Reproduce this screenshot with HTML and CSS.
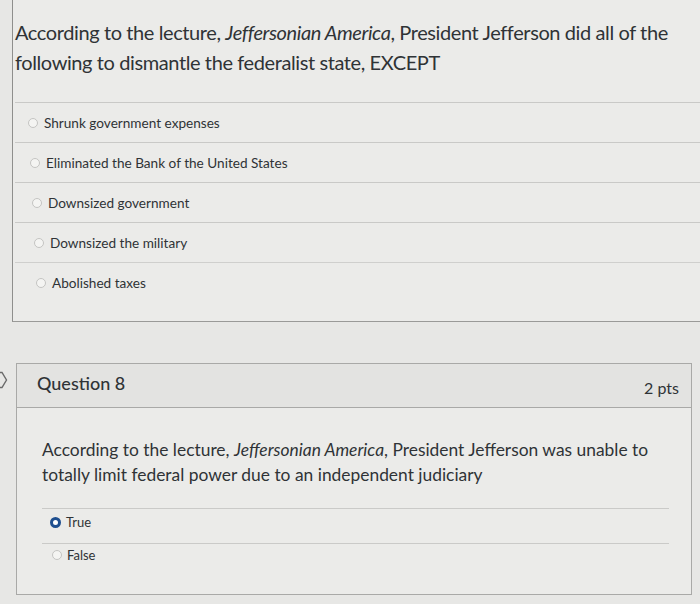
FILE: index.html
```html
<!DOCTYPE html>
<html>
<head>
<meta charset="utf-8">
<link rel="stylesheet" href="styles.css">
</head>
<body>
<div class="page">
  <section class="card card-top">
    <p class="q-text q-text-lg">According to the lecture, <em>Jeffersonian America</em>, President Jefferson did all of the following to dismantle the federalist state, EXCEPT</p>
    <ul class="answers answers-top">
      <li class="answer"><span class="radio"></span><span class="label">Shrunk government expenses</span></li>
      <li class="answer"><span class="radio"></span><span class="label">Eliminated the Bank of the United States</span></li>
      <li class="answer"><span class="radio"></span><span class="label">Downsized government</span></li>
      <li class="answer"><span class="radio"></span><span class="label">Downsized the military</span></li>
      <li class="answer"><span class="radio"></span><span class="label">Abolished taxes</span></li>
    </ul>
  </section>

  <div class="q-row">
    <svg class="flag" width="8" height="18" viewBox="0 0 8 18"><path d="M-4 1.5 H2 L6.5 9 L2 16.5 H-4" fill="none" stroke="#6a6a6a" stroke-width="1.4"/></svg>
    <section class="card card-q8">
      <header class="q-header">
        <span class="q-title">Question 8</span>
        <span class="q-pts">2 pts</span>
      </header>
      <div class="q-body">
        <p class="q-text q-text-md">According to the lecture, <em>Jeffersonian America</em>, President Jefferson was unable to totally limit federal power due to an independent judiciary</p>
        <ul class="answers answers-q8">
          <li class="answer small"><span class="radio checked"></span><span class="label">True</span></li>
          <li class="answer small"><span class="radio"></span><span class="label">False</span></li>
        </ul>
      </div>
    </section>
  </div>
</div>
</body>
</html>
```

FILE: styles.css
```css
* { box-sizing: border-box; }
html, body { margin: 0; padding: 0; }
body {
  background: #e7e7e5;
  font-family: Lato, "Liberation Sans", sans-serif;
  color: #2f3336;
  width: 700px;
  height: 604px;
  overflow: hidden;
}
.card {
  background: #ebebe9;
}
.card-top {
  margin-left: 12px;
  border-left: 1px solid #8f8f8d;
  border-bottom: 1px solid #9a9a98;
  padding: 17px 0 0 2px;
  height: 322px;
}
.q-text { margin: 0; }
.q-text em { font-style: italic; }
.q-text-lg {
  font-size: 20px;
  line-height: 30px;
  letter-spacing: -0.4px;
  padding-right: 20px;
}
.answers { list-style: none; margin: 0; padding: 0; }
.answers-top { margin-top: 25px; }
.answer {
  display: flex;
  align-items: center;
  border-top: 1px solid #c9c9c7;
  height: 40px;
  padding-left: 13px;
  font-size: 13.6px;
}
.answers-top .answer:nth-child(2) { padding-left: 15px; }
.answers-top .answer:nth-child(3) { padding-left: 17px; }
.answers-top .answer:nth-child(4) { padding-left: 19px; }
.answers-top .answer:nth-child(5) { padding-left: 21px; border-top-color: #cfcfcd; }
.radio {
  width: 10px;
  height: 10px;
  border-radius: 50%;
  border: 1px solid #c4c4c2;
  background: #f4f4f2;
  margin-right: 6px;
  flex: none;
}
.radio.checked {
  width: 11px;
  height: 11px;
  border: 3px solid #1f4f8f;
  background: #ffffff;
}
.q-row {
  display: flex;
  align-items: flex-start;
  margin-top: 41px;
}
.flag { margin-top: 8px; flex: none; }
.card-q8 {
  margin-left: 8px;
  width: 676px;
  border: 1px solid #a9a9a7;
  height: 232px;
}
.q-header {
  display: flex;
  justify-content: space-between;
  align-items: flex-start;
  height: 44px;
  background: #e3e3e1;
  border-bottom: 1px solid #a9a9a7;
  padding: 7px 12px 0 20px;
}
.q-title { font-size: 18px; font-weight: 500; line-height: 24px; }
.q-pts { font-size: 16px; line-height: 24px; padding-top: 5px; }
.q-body { padding: 29px 22px 0 25px; }
.q-text-md {
  font-size: 17.4px;
  line-height: 25px;
}
.answers-q8 { margin-top: 21px; }
.answer.small {
  font-size: 13px;
  height: 35px;
  align-items: flex-start;
  padding-top: 5px;
  padding-left: 8px;
  line-height: 16px;
  border-top-color: #cacac8;
}
.answer.small .radio { margin-top: 3px; margin-right: 5px; }
.answers-q8 .answer:nth-child(2) { padding-left: 10px; height: 30px; padding-top: 3px; }
```
